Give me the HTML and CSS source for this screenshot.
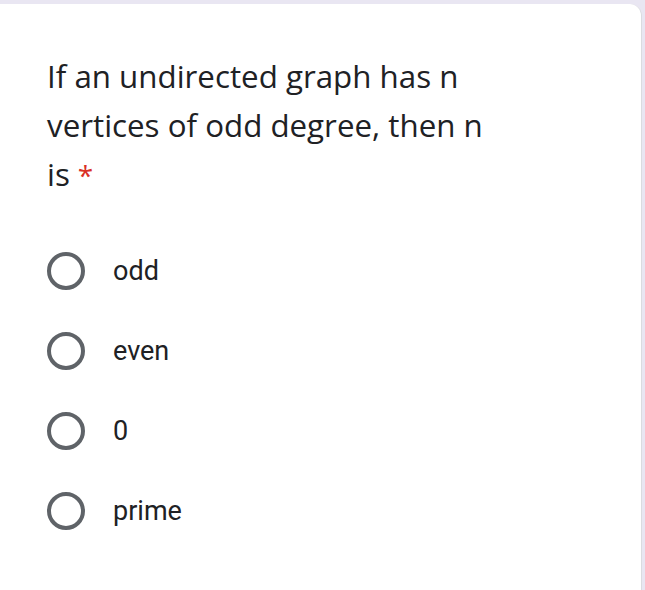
FILE: index.html
```html
<!DOCTYPE html>
<html>
<head>
<meta charset="utf-8">
<link rel="stylesheet" href="styles.css">
</head>
<body>
<div class="card">
  <div class="question">If an undirected graph has n vertices of odd degree, then n is<span class="req">*</span></div>
  <div class="options">
    <div class="option"><span class="radio"></span><span class="label">odd</span></div>
    <div class="option"><span class="radio"></span><span class="label">even</span></div>
    <div class="option"><span class="radio"></span><span class="label">0</span></div>
    <div class="option"><span class="radio"></span><span class="label">prime</span></div>
  </div>
</div>
</body>
</html>
```
FILE: styles.css
```css
html, body {
  margin: 0;
  padding: 0;
  background: #e9e6f2;
  width: 645px;
  height: 590px;
  overflow: hidden;
}
.card {
  box-sizing: border-box;
  margin: 4px 3px 0 -12px;
  height: 600px;
  background: #fff;
  border-radius: 12px;
  border-right: 1px solid #dadce0;
  padding: 48px 0 0 59px;
  font-family: Roboto, "Noto Sans", sans-serif;
  color: #202124;
}
.question {
  font-family: "Open Sans", Roboto, sans-serif;
  font-size: 31.3px;
  line-height: 49px;
  width: 455px;
}
.req {
  color: #d93025;
  margin-left: 8px;
  font-size: 28px;
}
.options {
  display: flex;
  flex-direction: column;
  gap: 42px;
  margin-top: 52px;
}
.option {
  display: flex;
  align-items: center;
  height: 38px;
}
.radio {
  box-sizing: border-box;
  width: 38px;
  height: 38px;
  border: 4px solid #5f6368;
  border-radius: 50%;
  margin-right: 28px;
}
.label {
  font-size: 27px;
  color: #202124;
}
```
